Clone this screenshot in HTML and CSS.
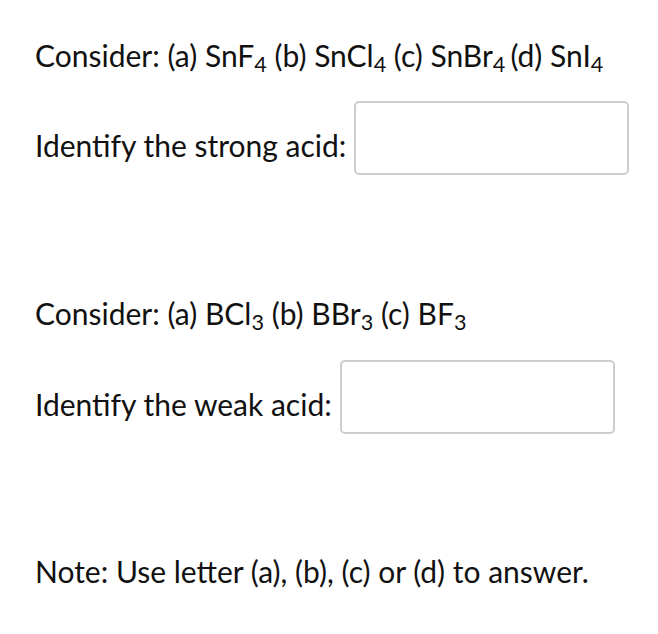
FILE: index.html
```html
<!DOCTYPE html>
<html>
<head>
<meta charset="utf-8">
<link rel="stylesheet" href="styles.css">
</head>
<body>
<div class="page">
  <p class="line l1">Consider: (a) SnF<sub>4</sub> (b) SnCl<sub>4</sub> (c) SnBr<sub>4</sub><span class="tight">(d)</span> SnI<sub>4</sub></p>
  <div class="row r1"><span class="label">Identify the strong acid:</span><span class="box"></span></div>
  <p class="line l2">Consider: (a) BCl<sub>3</sub> (b) BBr<sub>3</sub> (c) BF<sub>3</sub></p>
  <div class="row r2"><span class="label">Identify the weak acid:</span><span class="box"></span></div>
  <p class="line l3">Note: Use letter (a), (b), (c) or (d) to answer.</p>
</div>
</body>
</html>
```
FILE: styles.css
```css
html, body {
  margin: 0;
  background: #fff;
}
.page {
  padding: 0 0 0 35px;
  font-family: Lato, "Liberation Sans", sans-serif;
  font-size: 30px;
  color: #111;
  display: flex;
  flex-direction: column;
}
.line {
  margin: 0;
  line-height: 36px;
}
sub {
  font-size: 0.72em;
  vertical-align: -0.25em;
  line-height: 0;
}
.tight {
  margin-left: 5px;
}
.l1 { margin-top: 37px; }
.row {
  display: flex;
  align-items: flex-end;
  gap: 8px;
}
.label {
  line-height: 30px;
  margin-bottom: 15px;
}
.r1 { margin-top: 28px; }
.box {
  width: 271px;
  height: 70px;
  border: 2px solid #cdcdcd;
  border-radius: 5px;
  background: #fff;
}
.l2 { margin-top: 120px; }
.r2 { margin-top: 29px; }
.l3 { margin-top: 119px; }
```
